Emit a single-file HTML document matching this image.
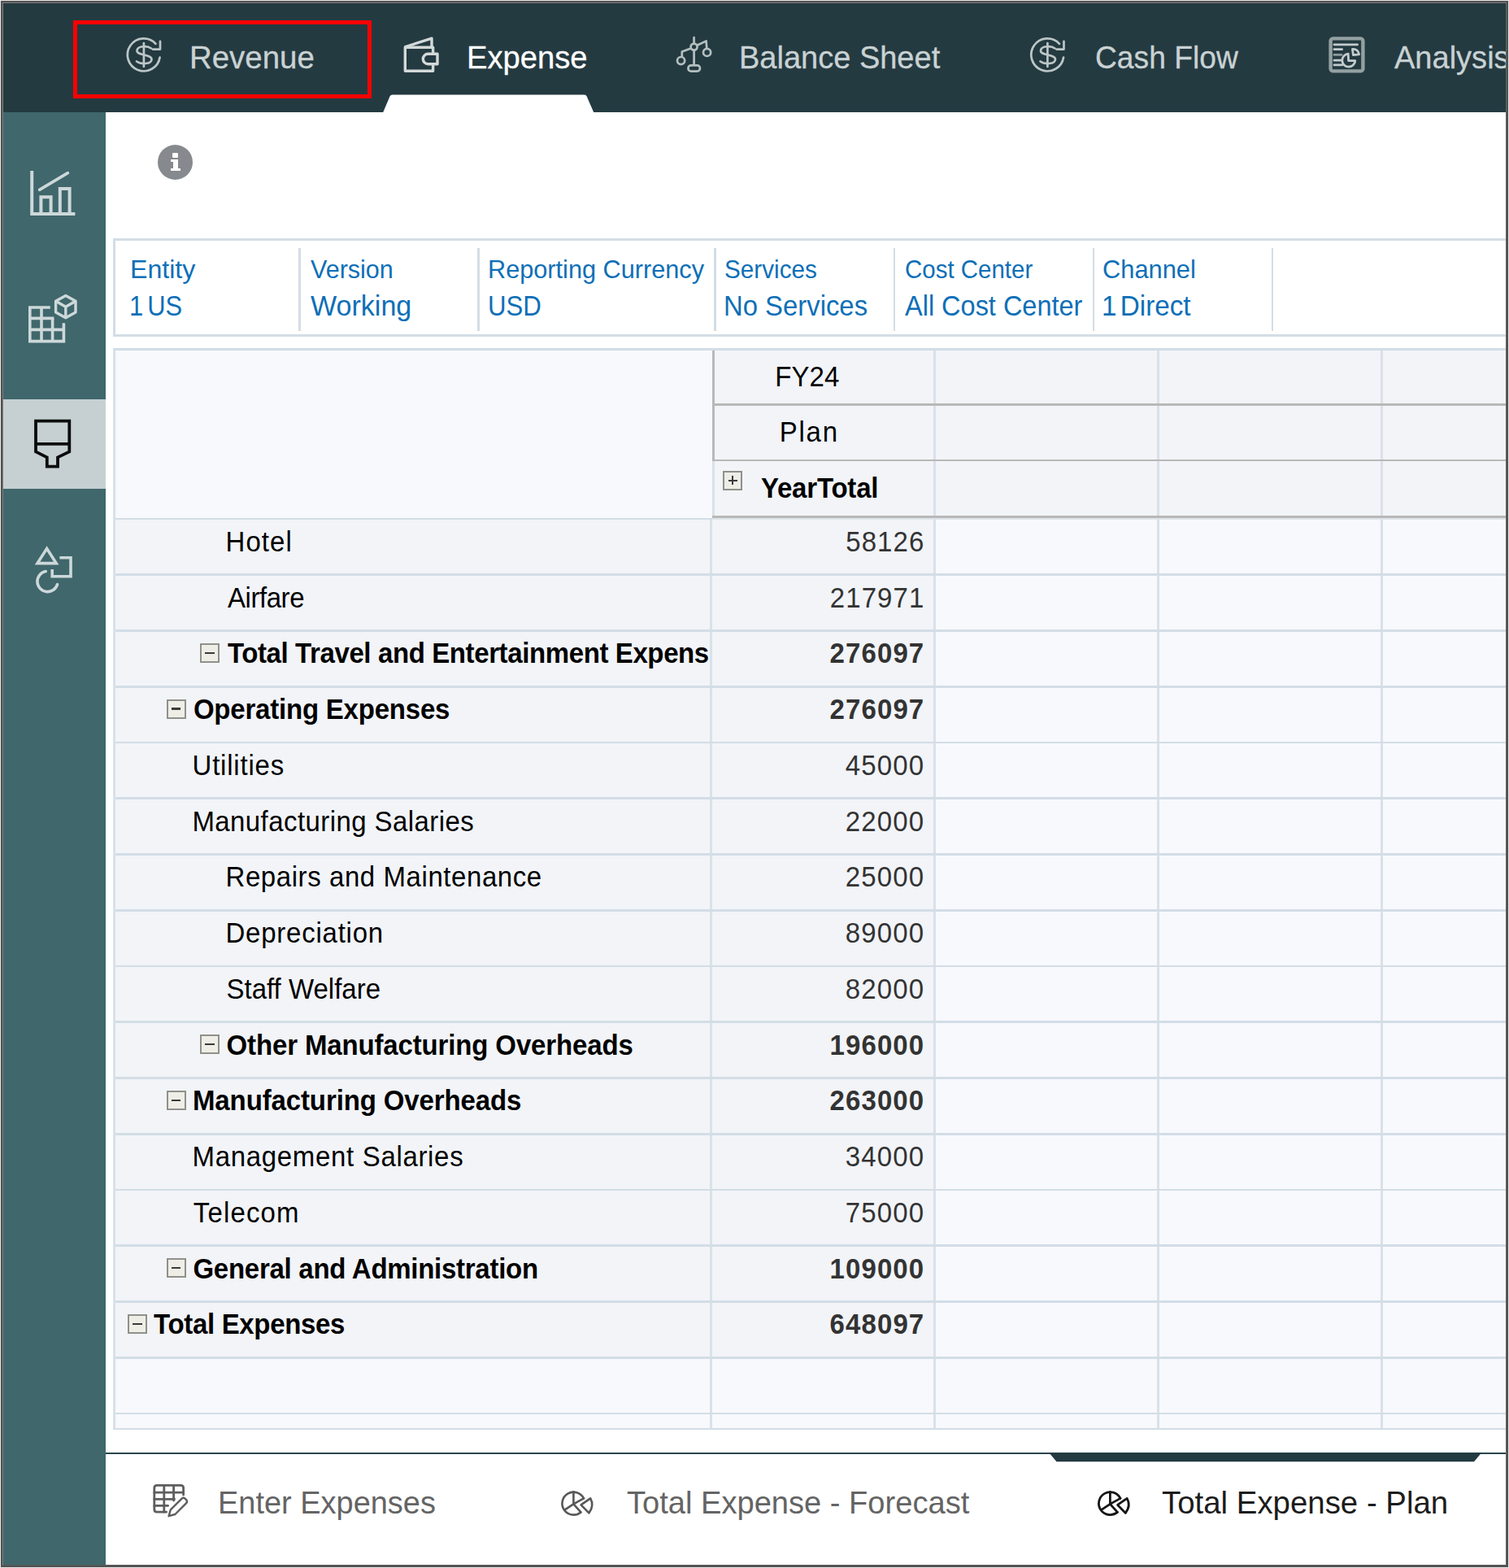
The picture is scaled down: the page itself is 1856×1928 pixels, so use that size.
<!DOCTYPE html>
<html lang="en">
<head>
<meta charset="utf-8">
<title>Expense</title>
<style>
html,body{margin:0;padding:0;background:#fff;}
body{width:1856px;height:1928px;overflow:hidden;font-family:"Liberation Sans",sans-serif;}
#app{position:relative;width:1856px;height:1928px;overflow:hidden;background:#fff;}
nav,aside,main,footer{display:block;}
.r,.t,.ic,.tg{position:absolute;display:block;}
.t{line-height:1;white-space:pre;color:#000;transform-origin:0 84.65%;}
.b{font-weight:700;}
.nv{color:#c9d2d3;-webkit-text-stroke:0.3px #c9d2d3;}
.nv.on{color:#fff;-webkit-text-stroke:0.3px #fff;}
.pl,.pv{color:#0e6fb7;}
.gh,.nm{color:#000;}
.vl{color:#333333;}
.tb{color:#646464;}
.tb.on{color:#1c1c1c;}
#hl{position:absolute;left:90px;top:25px;width:357px;height:86px;border:5px solid #fe0000;}
#info{position:absolute;left:194px;top:177.8px;width:43.4px;height:43.4px;border-radius:50%;background:#868a8e;}
#info i{position:absolute;display:block;background:#fff;}
.tg{width:20px;height:20px;border:2.4px solid #8f918a;background:#eeeee7;box-sizing:content-box;}
.tg::before{content:"";position:absolute;left:4.4px;top:8.9px;width:11.2px;height:2.2px;background:#3a3a3a;}
.tg.plus::after{content:"";position:absolute;left:8.9px;top:4.4px;width:2.2px;height:11.2px;background:#3a3a3a;}
#frame{position:absolute;left:0;top:0;width:1856px;height:1928px;box-sizing:border-box;border:1px solid #e7e7e7;pointer-events:none;}
#frame::before{content:"";position:absolute;left:0;top:0;right:0;bottom:0;border:2px solid #515151;}
#frame::after{content:"";position:absolute;left:2px;top:2px;right:2px;bottom:2px;border:1px solid;border-color:#7d7d7d #616161 #5a5a5a #7d7d7d;}
</style>
</head>
<body>
<div id="app">
<nav id="nav">
<div class="r" style="left:0px;top:0px;width:1856px;height:138px;background:#243a41;"></div>
<svg class="ic" style="left:468px;top:114px" width="266" height="26" viewBox="468 114 266 26"><path d="M471 138.6 L479.5 118.6 Q480.4 116.6 482.6 116.6 L718.6 116.6 Q720.8 116.6 721.7 118.6 L730.4 138.6 Z" fill="#fff"/></svg>
<span class="t nv" style="top:51.19px;font-size:39px;left:232.96px;transform:scale(0.9851,1);">Revenue</span>
<span class="t nv on" style="top:51.19px;font-size:39px;left:574.18px;transform:scale(0.9791,1);">Expense</span>
<span class="t nv" style="top:51.19px;font-size:39px;left:909.30px;transform:scale(0.9744,1);">Balance Sheet</span>
<span class="t nv" style="top:51.19px;font-size:39px;left:1346.98px;transform:scale(0.9542,1);">Cash Flow</span>
<span class="t nv" style="top:51.19px;font-size:39px;left:1714.60px;transform:scale(0.975,1);">Analysis</span>
<svg class="ic" style="left:0;top:0" width="1856" height="138" viewBox="0 0 1856 138" fill="none" stroke-linecap="round" stroke-linejoin="round">
<g id="ic-revenue" stroke="#bcc6c7" stroke-width="2.7">
<path d="M196.6 70.5 A20 20 0 1 1 191.5 53.8"/>
<path d="M197 50.8 V60.6 H188"/>
<path d="M186 59.5 C181 55.5 168.5 56.5 168.5 62.5 C168.5 68.5 186.5 66.5 186.5 73 C186.5 79 173.5 79.5 168 75.5"/>
<path d="M176.9 53.2 V82"/>
</g>
<g id="ic-expense" stroke="#d3d9d9" stroke-width="3.4">
<path d="M532.6 66 V58.3 H498.3 V87.2 H532.6 V79.5"/>
<path d="M498.6 57.6 L531 47.2 V57.6"/>
<path d="M538 66.3 H526.5 A6.2 6.2 0 0 0 526.5 78.7 H538 Z"/>
</g>
<g id="ic-balance" stroke="#b4bfc0" stroke-width="2.7">
<path d="M853.6 46 V53.4 M853.6 61.8 V79.4"/>
<circle cx="853.6" cy="57.6" r="4"/>
<path d="M849.8 59.4 L838.8 63.6 V69.4 M857.4 55.8 L868.6 50.4 L869.2 58.6"/>
<circle cx="837.6" cy="74.6" r="4.6"/>
<circle cx="869.6" cy="64.4" r="4.6"/>
<rect x="846.4" y="80.4" width="14.6" height="7.2" rx="3.6"/>
</g>
<g id="ic-cash" stroke="#bcc6c7" stroke-width="2.7">
<path d="M1308.1 70.5 A20 20 0 1 1 1303 53.8"/>
<path d="M1308.5 50.8 V60.6 H1299.5"/>
<path d="M1297.5 59.5 C1292.5 55.5 1280 56.5 1280 62.5 C1280 68.5 1298 66.5 1298 73 C1298 79 1285 79.5 1279.5 75.5"/>
<path d="M1288.4 53.2 V82"/>
</g>
<g id="ic-analysis" stroke="#93a1a2" stroke-width="4.4">
<rect x="1636.6" y="47.4" width="39.8" height="40" rx="3"/>
<g stroke="#c3cccd" stroke-width="2.8">
<path d="M1641 54.8 H1669.6 M1641 60.7 H1650.6 M1641 74.2 H1650 M1641 79.9 H1650.6"/>
<path d="M1641 67.4 H1650" stroke="#8d9b9c"/>
<path d="M1658.2 66.2 A8 8 0 1 0 1666.8 74.6 H1658.6 Z"/>
<path d="M1663.4 60.4 A7 7 0 0 1 1671.6 66.8 L1664.4 67.6 Z"/>
</g>
</g>
</svg>
<div id="hl"></div>
</nav>
<aside id="side">
<div class="r" style="left:0px;top:138px;width:130.4px;height:1790px;background:#3f676c;"></div>
<div class="r" style="left:0px;top:491.3px;width:130.4px;height:109.7px;background:#c6d0d2;"></div>
<svg class="ic" style="left:0;top:138px" width="130" height="640" viewBox="0 138 130 640" fill="none" stroke-linecap="butt" stroke-linejoin="miter">
<g id="ic-chart" stroke="#cdd8d9" stroke-width="4">
<path d="M39.2 210 V263 H92.4"/>
<path d="M50.4 263 V242.2 H62.6 V263"/>
<path d="M73.8 263 V232 H85.6 V263"/>
<path d="M48.6 233.4 L83.4 212.6" stroke-linecap="round" stroke-width="3.6"/>
</g>
<g id="ic-cube" stroke="#cdd8d9" stroke-width="3.6">
<path d="M61.8 378 H36.8 V419.6 H78.4 V397.2"/>
<path d="M51 378 V419.6 M64.6 391.4 V419.6"/>
<path d="M36.8 391.4 H66.4 M36.8 405.4 H78.4"/>
<g stroke-linejoin="round" stroke-width="3.4">
<path d="M80.8 363.4 L93 370.2 V384 L80.8 390.8 L68.6 384 V370.2 Z"/>
<path d="M68.6 370.2 L80.8 377.2 L93 370.2 M80.8 377.2 V390.8"/>
</g>
</g>
<g id="ic-funnel" stroke="#0c0c0c" stroke-width="3.8" stroke-linejoin="miter">
<path d="M44 517.7 H85.3 V555.4 L71 562.4 V573.6 H57.8 V562.4 L44 555.4 Z"/>
<path d="M44 545.8 H85.3"/>
</g>
<g id="ic-shapes" stroke="#cdd8d9" stroke-width="3.6">
<path d="M57.6 674.6 L69.2 692.6 H46 Z" stroke-linejoin="miter"/>
<path d="M73.4 685.8 H87 V708.8 H64.2 V700"/>
<path d="M56.2 702.6 A12.6 12.6 0 1 0 70.6 718.6" stroke-linecap="round"/>
</g>
</svg>
</aside>
<main id="main">
<div id="info"><i style="left:18.2px;top:9.8px;width:6.6px;height:6.4px;border-radius:1.2px"></i><i style="left:15.8px;top:18.6px;width:9px;height:3px"></i><i style="left:18.8px;top:18.6px;width:6px;height:13.6px"></i><i style="left:15.8px;top:29.4px;width:11.8px;height:3.2px"></i></div>
<div id="pov">
<div class="r" style="left:139px;top:293px;width:1717px;height:121px;background:#d3dde6;"></div>
<div class="r" style="left:141.7px;top:295.7px;width:1714.3px;height:115.6px;background:#fff;"></div>
<div class="r" style="left:367.3px;top:304.5px;width:2.6px;height:102.5px;background:#d3dde6;"></div>
<div class="r" style="left:587.2px;top:304.5px;width:2.6px;height:102.5px;background:#d3dde6;"></div>
<div class="r" style="left:878.4px;top:304.5px;width:2.6px;height:102.5px;background:#d3dde6;"></div>
<div class="r" style="left:1098.9px;top:304.5px;width:2.6px;height:102.5px;background:#d3dde6;"></div>
<div class="r" style="left:1343.7px;top:304.5px;width:2.6px;height:102.5px;background:#d3dde6;"></div>
<div class="r" style="left:1563.7px;top:304.5px;width:2.6px;height:102.5px;background:#d3dde6;"></div>
<span class="t pl" style="top:315.31px;font-size:32px;left:159.73px;transform:scale(1.0038,1);">Entity</span>
<span class="t pv" style="top:358.95px;font-size:35.5px;left:158.84px;word-spacing:-3.938px;transform:scale(0.8691,1);">1 US</span>
<span class="t pl" style="top:315.31px;font-size:32px;left:382.31px;transform:scale(0.9537,1);">Version</span>
<span class="t pv" style="top:358.95px;font-size:35.5px;left:382.36px;transform:scale(0.9595,1);">Working</span>
<span class="t pl" style="top:315.31px;font-size:32px;left:599.95px;transform:scale(0.9589,1);">Reporting Currency</span>
<span class="t pv" style="top:358.95px;font-size:35.5px;left:600.10px;transform:scale(0.8787,1);">USD</span>
<span class="t pl" style="top:315.31px;font-size:32px;left:891.46px;transform:scale(0.9277,1);">Services</span>
<span class="t pv" style="top:358.95px;font-size:35.5px;left:890.48px;transform:scale(0.9252,1);">No Services</span>
<span class="t pl" style="top:315.31px;font-size:32px;left:1112.67px;transform:scale(0.9211,1);">Cost Center</span>
<span class="t pv" style="top:358.95px;font-size:35.5px;left:1113.08px;transform:scale(0.9148,1);">All Cost Center</span>
<span class="t pl" style="top:315.31px;font-size:32px;left:1356.40px;transform:scale(0.9637,1);">Channel</span>
<span class="t pv" style="top:358.95px;font-size:35.5px;left:1354.66px;word-spacing:-5.363px;transform:scale(0.9372,1);">1 Direct</span>
</div>
<div id="grid">
<div class="r" style="left:139.2px;top:428.4px;width:1716.8px;height:1329.9px;background:#d3dde6;"></div>
<div class="r" style="left:139.2px;top:430.8px;width:2.4px;height:1325.2px;background:#d9e1e9;"></div>
<div class="r" style="left:141.6px;top:430.8px;width:1714.4px;height:1325.2px;background:#f8f9fd;"></div>
<div class="r" style="left:141.6px;top:638px;width:732.4px;height:1031.3px;background:#f2f4f8;"></div>
<div class="r" style="left:876px;top:638px;width:273px;height:1031.3px;background:#f2f4f8;"></div>
<div class="r" style="left:877px;top:430.8px;width:979px;height:205.2px;background:#f2f4f8;"></div>
<div class="r" style="left:1148.2px;top:430.8px;width:2.6px;height:1325.2px;background:#d9e1e9;"></div>
<div class="r" style="left:1423.2px;top:430.8px;width:2.6px;height:1325.2px;background:#d9e1e9;"></div>
<div class="r" style="left:1698.2px;top:430.8px;width:2.6px;height:1325.2px;background:#d9e1e9;"></div>
<div class="r" style="left:873.2px;top:637px;width:2.6px;height:1119px;background:#d9e1e9;"></div>
<div class="r" style="left:141.6px;top:636.7px;width:1714.4px;height:2.6px;background:#d3dde6;"></div>
<div class="r" style="left:141.6px;top:705.45px;width:1714.4px;height:2.6px;background:#d3dde6;"></div>
<div class="r" style="left:141.6px;top:774.2px;width:1714.4px;height:2.6px;background:#d3dde6;"></div>
<div class="r" style="left:141.6px;top:842.95px;width:1714.4px;height:2.6px;background:#d3dde6;"></div>
<div class="r" style="left:141.6px;top:911.7px;width:1714.4px;height:2.6px;background:#d3dde6;"></div>
<div class="r" style="left:141.6px;top:980.45px;width:1714.4px;height:2.6px;background:#d3dde6;"></div>
<div class="r" style="left:141.6px;top:1049.2px;width:1714.4px;height:2.6px;background:#d3dde6;"></div>
<div class="r" style="left:141.6px;top:1117.95px;width:1714.4px;height:2.6px;background:#d3dde6;"></div>
<div class="r" style="left:141.6px;top:1186.7px;width:1714.4px;height:2.6px;background:#d3dde6;"></div>
<div class="r" style="left:141.6px;top:1255.45px;width:1714.4px;height:2.6px;background:#d3dde6;"></div>
<div class="r" style="left:141.6px;top:1324.2px;width:1714.4px;height:2.6px;background:#d3dde6;"></div>
<div class="r" style="left:141.6px;top:1392.95px;width:1714.4px;height:2.6px;background:#d3dde6;"></div>
<div class="r" style="left:141.6px;top:1461.7px;width:1714.4px;height:2.6px;background:#d3dde6;"></div>
<div class="r" style="left:141.6px;top:1530.45px;width:1714.4px;height:2.6px;background:#d3dde6;"></div>
<div class="r" style="left:141.6px;top:1599.2px;width:1714.4px;height:2.6px;background:#d3dde6;"></div>
<div class="r" style="left:141.6px;top:1667.95px;width:1714.4px;height:2.6px;background:#d3dde6;"></div>
<div class="r" style="left:141.6px;top:1736.7px;width:1714.4px;height:2.6px;background:#d3dde6;"></div>
<div class="r" style="left:876.2px;top:430.8px;width:2.4px;height:135.2px;background:#b8b8b8;"></div>
<div class="r" style="left:876.2px;top:566px;width:2.4px;height:68.4px;background:#d9e1e9;"></div>
<div class="r" style="left:876.2px;top:496.2px;width:979.8px;height:2.4px;background:#b8b8b8;"></div>
<div class="r" style="left:876.2px;top:564.8px;width:979.8px;height:2.4px;background:#b8b8b8;"></div>
<div class="r" style="left:876.2px;top:634.4px;width:979.8px;height:2.6px;background:#b8b8b8;"></div>
<div class="r" style="left:876.2px;top:637px;width:979.8px;height:2px;background:#dfe4e9;"></div>
<span class="t gh" style="top:446.57px;font-size:33px;left:953.19px;letter-spacing:0.067px;transform:scale(1,1.075);">FY24</span>
<span class="t gh" style="top:515.27px;font-size:33px;left:958.69px;letter-spacing:1.788px;transform:scale(1,1.075);">Plan</span>
<span class="t gh b" style="top:583.67px;font-size:33px;left:935.90px;letter-spacing:-0.188px;transform:scale(1,1.075);">YearTotal</span>
<span class="tg plus" style="left:889.2px;top:578.8px"></span>
<span class="t nm" style="top:649.77px;font-size:33px;left:277.59px;letter-spacing:1.050px;transform:scale(1,1.075);">Hotel</span>
<span class="t vl" style="top:649.77px;font-size:33px;left:1040.21px;letter-spacing:1.097px;transform:scale(1,1.075);">58126</span>
<span class="t nm" style="top:718.52px;font-size:33px;left:279.97px;letter-spacing:-0.440px;transform:scale(1,1.075);">Airfare</span>
<span class="t vl" style="top:718.52px;font-size:33px;left:1020.74px;letter-spacing:1.097px;transform:scale(1,1.075);">217971</span>
<span class="tg minus" style="left:246px;top:790.80px"></span>
<span class="t nm b" style="top:787.27px;font-size:33px;left:279.88px;letter-spacing:-0.390px;transform:scale(1,1.075);">Total Travel and Entertainment Expens</span>
<span class="t vl b" style="top:787.27px;font-size:33px;left:1020.61px;letter-spacing:1.097px;transform:scale(1,1.075);">276097</span>
<span class="tg minus" style="left:204.5px;top:859.55px"></span>
<span class="t nm b" style="top:856.02px;font-size:33px;left:237.88px;letter-spacing:-0.208px;transform:scale(1,1.075);">Operating Expenses</span>
<span class="t vl b" style="top:856.02px;font-size:33px;left:1020.61px;letter-spacing:1.097px;transform:scale(1,1.075);">276097</span>
<span class="t nm" style="top:924.77px;font-size:33px;left:236.52px;letter-spacing:0.787px;transform:scale(1,1.075);">Utilities</span>
<span class="t vl" style="top:924.77px;font-size:33px;left:1039.83px;letter-spacing:1.097px;transform:scale(1,1.075);">45000</span>
<span class="t nm" style="top:993.52px;font-size:33px;left:236.39px;letter-spacing:0.425px;transform:scale(1,1.075);">Manufacturing Salaries</span>
<span class="t vl" style="top:993.52px;font-size:33px;left:1039.83px;letter-spacing:1.097px;transform:scale(1,1.075);">22000</span>
<span class="t nm" style="top:1062.27px;font-size:33px;left:277.49px;letter-spacing:0.575px;transform:scale(1,1.075);">Repairs and Maintenance</span>
<span class="t vl" style="top:1062.27px;font-size:33px;left:1039.83px;letter-spacing:1.097px;transform:scale(1,1.075);">25000</span>
<span class="t nm" style="top:1131.02px;font-size:33px;left:277.49px;letter-spacing:0.763px;transform:scale(1,1.075);">Depreciation</span>
<span class="t vl" style="top:1131.02px;font-size:33px;left:1039.83px;letter-spacing:1.097px;transform:scale(1,1.075);">89000</span>
<span class="t nm" style="top:1199.77px;font-size:33px;left:278.48px;letter-spacing:-0.002px;transform:scale(1,1.075);">Staff Welfare</span>
<span class="t vl" style="top:1199.77px;font-size:33px;left:1039.83px;letter-spacing:1.097px;transform:scale(1,1.075);">82000</span>
<span class="tg minus" style="left:246px;top:1272.05px"></span>
<span class="t nm b" style="top:1268.52px;font-size:33px;left:278.58px;letter-spacing:-0.144px;transform:scale(1,1.075);">Other Manufacturing Overheads</span>
<span class="t vl b" style="top:1268.52px;font-size:33px;left:1020.57px;letter-spacing:1.097px;transform:scale(1,1.075);">196000</span>
<span class="tg minus" style="left:204.5px;top:1340.80px"></span>
<span class="t nm b" style="top:1337.27px;font-size:33px;left:237.01px;letter-spacing:-0.121px;transform:scale(1,1.075);">Manufacturing Overheads</span>
<span class="t vl b" style="top:1337.27px;font-size:33px;left:1020.57px;letter-spacing:1.097px;transform:scale(1,1.075);">263000</span>
<span class="t nm" style="top:1406.02px;font-size:33px;left:236.59px;letter-spacing:0.669px;transform:scale(1,1.075);">Management Salaries</span>
<span class="t vl" style="top:1406.02px;font-size:33px;left:1039.83px;letter-spacing:1.097px;transform:scale(1,1.075);">34000</span>
<span class="t nm" style="top:1474.77px;font-size:33px;left:237.77px;letter-spacing:1.160px;transform:scale(1,1.075);">Telecom</span>
<span class="t vl" style="top:1474.77px;font-size:33px;left:1039.83px;letter-spacing:1.097px;transform:scale(1,1.075);">75000</span>
<span class="tg minus" style="left:204.5px;top:1547.05px"></span>
<span class="t nm b" style="top:1543.52px;font-size:33px;left:237.48px;letter-spacing:-0.277px;transform:scale(1,1.075);">General and Administration</span>
<span class="t vl b" style="top:1543.52px;font-size:33px;left:1020.57px;letter-spacing:1.097px;transform:scale(1,1.075);">109000</span>
<span class="tg minus" style="left:157px;top:1615.80px"></span>
<span class="t nm b" style="top:1612.27px;font-size:33px;left:189.08px;letter-spacing:-0.332px;transform:scale(1,1.075);">Total Expenses</span>
<span class="t vl b" style="top:1612.27px;font-size:33px;left:1020.61px;letter-spacing:1.097px;transform:scale(1,1.075);">648097</span>
</div>
</main>
<footer id="tabs">
<div class="r" style="left:130px;top:1786.2px;width:1726px;height:2.2px;background:#2d474d;"></div>
<svg class="ic" style="left:1288px;top:1786px" width="538" height="13" viewBox="1288 1786 538 13"><path d="M1290.5 1786.4 L1822 1786.4 L1813 1797.2 L1299.5 1797.2 Z" fill="#233a41"/></svg>
<span class="t tb" style="top:1827.59px;font-size:39px;left:267.60px;transform:scale(0.9731,1);">Enter Expenses</span>
<span class="t tb" style="top:1827.59px;font-size:39px;left:771.19px;transform:scale(0.9766,1);">Total Expense - Forecast</span>
<span class="t tb on" style="top:1827.59px;font-size:39px;left:1428.69px;transform:scale(0.9846,1);">Total Expense - Plan</span>
<svg class="ic" style="left:130px;top:1800px" width="1722" height="90" viewBox="130 1800 1722 90" fill="none" stroke-linecap="round" stroke-linejoin="round">
<g id="ic-form" stroke="#5e5e5e" stroke-width="2.8">
<path d="M225.6 1838 V1829.6 Q225.6 1826.4 222.4 1826.4 H193 Q189.8 1826.4 189.8 1829.6 V1856 Q189.8 1859.2 193 1859.2 H204.6"/>
<path d="M189.8 1835.2 H225.6 M189.8 1843.4 H214.6 M189.8 1851.4 H206.6"/>
<path d="M201.8 1826.4 V1859.2 M213.6 1826.4 V1845"/>
<path d="M207.6 1864.2 L209.8 1856.4 L223.4 1842.8 Q225.6 1840.8 227.8 1842.8 L229.2 1844.2 Q231 1846.4 229 1848.4 L215.4 1862 Z" stroke-width="2.4"/>
</g>
<g id="ic-pie1" stroke="#585858" stroke-width="2.6">
<path d="M718 1842.4 A14 14 0 1 0 714.4 1859.4"/>
<path d="M705.4 1834.4 V1849.4 L718 1842.4 M705.4 1849.4 L694.4 1856.6 M705.4 1849.4 L714.4 1859.4"/>
<path d="M714.6 1850.4 L726.2 1842.4 Q731.2 1851.4 724.4 1860.4 Z"/>
</g>
<g id="ic-pie2" stroke="#161616" stroke-width="2.8">
<path d="M1378 1842.4 A14 14 0 1 0 1374.4 1859.4"/>
<path d="M1365.4 1834.4 V1849.4 L1378 1842.4 M1365.4 1849.4 L1354.4 1856.6 M1365.4 1849.4 L1374.4 1859.4"/>
<path d="M1374.6 1850.4 L1386.2 1842.4 Q1391.2 1851.4 1384.4 1860.4 Z"/>
</g>
</svg>
</footer>
<div id="frame"></div>
</div>
</body>
</html>
